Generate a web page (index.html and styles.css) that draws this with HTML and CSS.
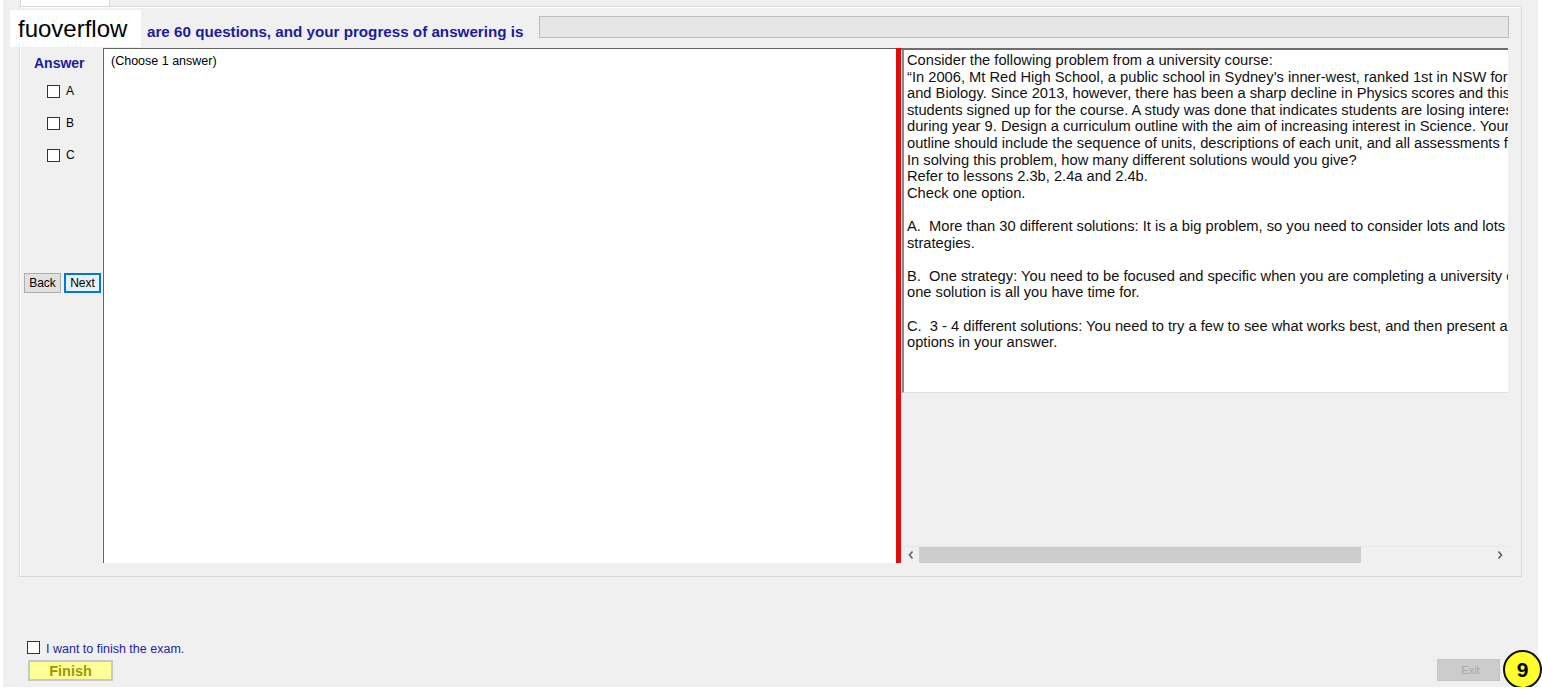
FILE: index.html
```html
<!DOCTYPE html>
<html lang="en">
<head>
  <meta charset="utf-8">
  <title>Exam</title>
  <link rel="stylesheet" href="styles.css">
</head>
<body>
  <div class="window">
    <div class="watermark">fuoverflow</div>

    <div class="tab-strip">
      <div class="tab"></div>
    </div>

    <div class="tab-page">
      <div class="head">
        <span class="progress-label">are 60 questions, and your progress of answering is</span>
        <div class="progress"></div>
      </div>

      <div class="body">
        <div class="answers">
          <div class="answer-title">Answer</div>
          <label class="option"><span class="box"></span>A</label>
          <label class="option"><span class="box"></span>B</label>
          <label class="option"><span class="box"></span>C</label>
          <div class="nav">
            <button class="win-button">Back</button>
            <button class="win-button focused">Next</button>
          </div>
        </div>

        <div class="choose">(Choose 1 answer)</div>

        <div class="splitter"></div>

        <div class="question">
          <div class="question-view">
            <div class="question-text">Consider the following problem from a university course:
“In 2006, Mt Red High School, a public school in Sydney’s inner-west, ranked 1st in NSW for Physics, Chemistry
and Biology. Since 2013, however, there has been a sharp decline in Physics scores and this year only 12
students signed up for the course. A study was done that indicates students are losing interest in Science
during year 9. Design a curriculum outline with the aim of increasing interest in Science. Your curriculum
outline should include the sequence of units, descriptions of each unit, and all assessments for the year.”
In solving this problem, how many different solutions would you give?
Refer to lessons 2.3b, 2.4a and 2.4b.
Check one option.

A.  More than 30 different solutions: It is a big problem, so you need to consider lots and lots of different
strategies.

B.  One strategy: You need to be focused and specific when you are completing a university course, so
one solution is all you have time for.

C.  3 - 4 different solutions: You need to try a few to see what works best, and then present all the
options in your answer.</div>
          </div>
          <div class="hscroll">
            <svg class="arrow" width="8" height="10" viewBox="0 0 8 10"><path d="M5.5 1.5 L2.5 5 L5.5 8.5" fill="none" stroke="#606060" stroke-width="1.6"/></svg>
            <div class="track"><div class="thumb"></div></div>
            <svg class="arrow" width="8" height="10" viewBox="0 0 8 10"><path d="M2.5 1.5 L5.5 5 L2.5 8.5" fill="none" stroke="#606060" stroke-width="1.6"/></svg>
          </div>
        </div>
      </div>
    </div>

    <div class="footer">
      <div class="finish-group">
        <label class="finish-check"><span class="box"></span>I want to finish the exam.</label>
        <button class="finish-button">Finish</button>
      </div>
      <button class="exit-button" disabled>Exit</button>
    </div>

    <div class="badge">9</div>
  </div>
</body>
</html>
```

FILE: styles.css
```css
body {
  margin: 0;
  background-color: #fff;
  font-family: "Liberation Sans", Arial, sans-serif;
  color: #000;
}

.window {
  position: relative;
  width: 1535px;
  height: 687px;
  margin-left: 3px;
  background-color: #f0f0f0;
}

.watermark {
  position: absolute;
  left: 7px;
  top: 10px;
  width: 131px;
  height: 37px;
  background-color: #fff;
  font-size: 24px;
  line-height: 37px;
  padding-left: 8px;
  box-sizing: border-box;
  z-index: 2;
}

.tab-strip {
  height: 6px;
  padding-left: 17px;
}

.tab {
  width: 90px;
  height: 6px;
  background-color: #fff;
  border-left: 1px solid #d9d9d9;
  border-right: 1px solid #d9d9d9;
  box-sizing: border-box;
}

.tab-page {
  margin-left: 16px;
  width: 1503px;
  height: 571px;
  box-sizing: border-box;
  border: 1px solid #d9d9d9;
  box-shadow: inset 1px 1px 0 #fff;
  padding: 0 12px 0 3px;
}

.head {
  height: 41px;
  display: flex;
  align-items: center;
}

.progress-label {
  font-weight: bold;
  font-size: 15.2px;
  color: #1c1c9c;
  margin-left: 124px;
  margin-top: 8px;
  white-space: nowrap;
}

.progress {
  margin-left: 16px;
  margin-top: -2px;
  flex: 1;
  height: 22px;
  box-sizing: border-box;
  background-color: #e6e6e6;
  border: 1px solid #bcbcbc;
}

.body {
  display: grid;
  grid-template-columns: 80px 793px 5px 607px;
  height: 513px;
}

.answers {
  display: flex;
  flex-direction: column;
  align-items: flex-start;
}

.answer-title {
  margin: 7px 0 0 11px;
  font-weight: bold;
  font-size: 14px;
  color: #1c1c9c;
}

.option {
  display: flex;
  align-items: center;
  gap: 6px;
  font-size: 12px;
  margin-left: 24px;
  height: 14px;
}

.answer-title + .option {
  margin-top: 13px;
}

.option + .option {
  margin-top: 18px;
}

.box {
  width: 13px;
  height: 13px;
  box-sizing: border-box;
  background-color: #fff;
  border: 1px solid #333;
}

.nav {
  display: flex;
  gap: 3px;
  margin: 111px 0 0 1px;
}

.win-button {
  width: 37px;
  height: 20px;
  padding: 0;
  font-family: "Liberation Sans", Arial, sans-serif;
  font-size: 12px;
  background-color: #e1e1e1;
  border: 1px solid #adadad;
  color: #000;
}

.win-button.focused {
  background-color: #e5f1fb;
  border: 2px solid #0078d7;
}

.choose {
  background-color: #fff;
  border-left: 1px solid #646464;
  border-top: 1px solid #646464;
  font-size: 12.5px;
  padding: 5px 7px;
}

.splitter {
  background-color: #e00d0d;
  height: 515px;
}

.question {
  display: flex;
  flex-direction: column;
  border-top: 2px solid #6e6e6e;
  overflow: hidden;
}

.question-view {
  flex: 1;
  display: flex;
  flex-direction: column;
}

.question-text {
  height: 343px;
  box-sizing: border-box;
  background-color: #fff;
  border-left: 2px solid #8a8a8a;
  border-bottom: 1px solid #e0e0e0;
  margin-left: 1px;
  padding: 2px 0 0 3px;
  font-size: 14.7px;
  line-height: 16.6px;
  white-space: pre;
  overflow: hidden;
  color: #111;
}

.hscroll {
  height: 16px;
  display: flex;
  align-items: center;
  background-color: #f0f0f0;
  border-top: 1px solid #e8e8e8;
  margin-left: 2px;
}

.arrow {
  width: 16px;
  flex: none;
}

.track {
  flex: 1;
  height: 16px;
}

.thumb {
  width: 442px;
  height: 16px;
  background-color: #cdcdcd;
}

.footer {
  display: flex;
  justify-content: space-between;
  align-items: flex-end;
  padding: 64px 38px 0 24px;
}

.finish-group {
  display: flex;
  flex-direction: column;
  align-items: flex-start;
}

.finish-check {
  display: flex;
  align-items: center;
  gap: 6px;
  font-size: 12.5px;
  color: #1f1fa0;
}

.finish-check .box {
  margin-bottom: 2px;
}

.finish-button {
  margin-top: 4px;
  margin-left: 1px;
  width: 85px;
  height: 21px;
  padding: 0;
  background-color: #ffff99;
  border: 2px solid #c8c8c8;
  font-family: "Liberation Sans", Arial, sans-serif;
  font-weight: bold;
  font-size: 14.5px;
  color: #9a9a00;
}

.exit-button {
  width: 63px;
  height: 22px;
  padding: 0 0 0 4px;
  background-color: #cccccc;
  border: 1px solid #c4c4c4;
  font-family: "Liberation Sans", Arial, sans-serif;
  font-size: 11px;
  color: #a6a6a6;
}

.badge {
  position: absolute;
  left: 1500px;
  top: 650px;
  width: 39px;
  height: 39px;
  box-sizing: border-box;
  border-radius: 50%;
  border: 2px solid #111;
  background-color: #ffff2e;
  font-weight: bold;
  font-size: 21px;
  line-height: 35px;
  text-align: center;
  color: #000;
}
```
